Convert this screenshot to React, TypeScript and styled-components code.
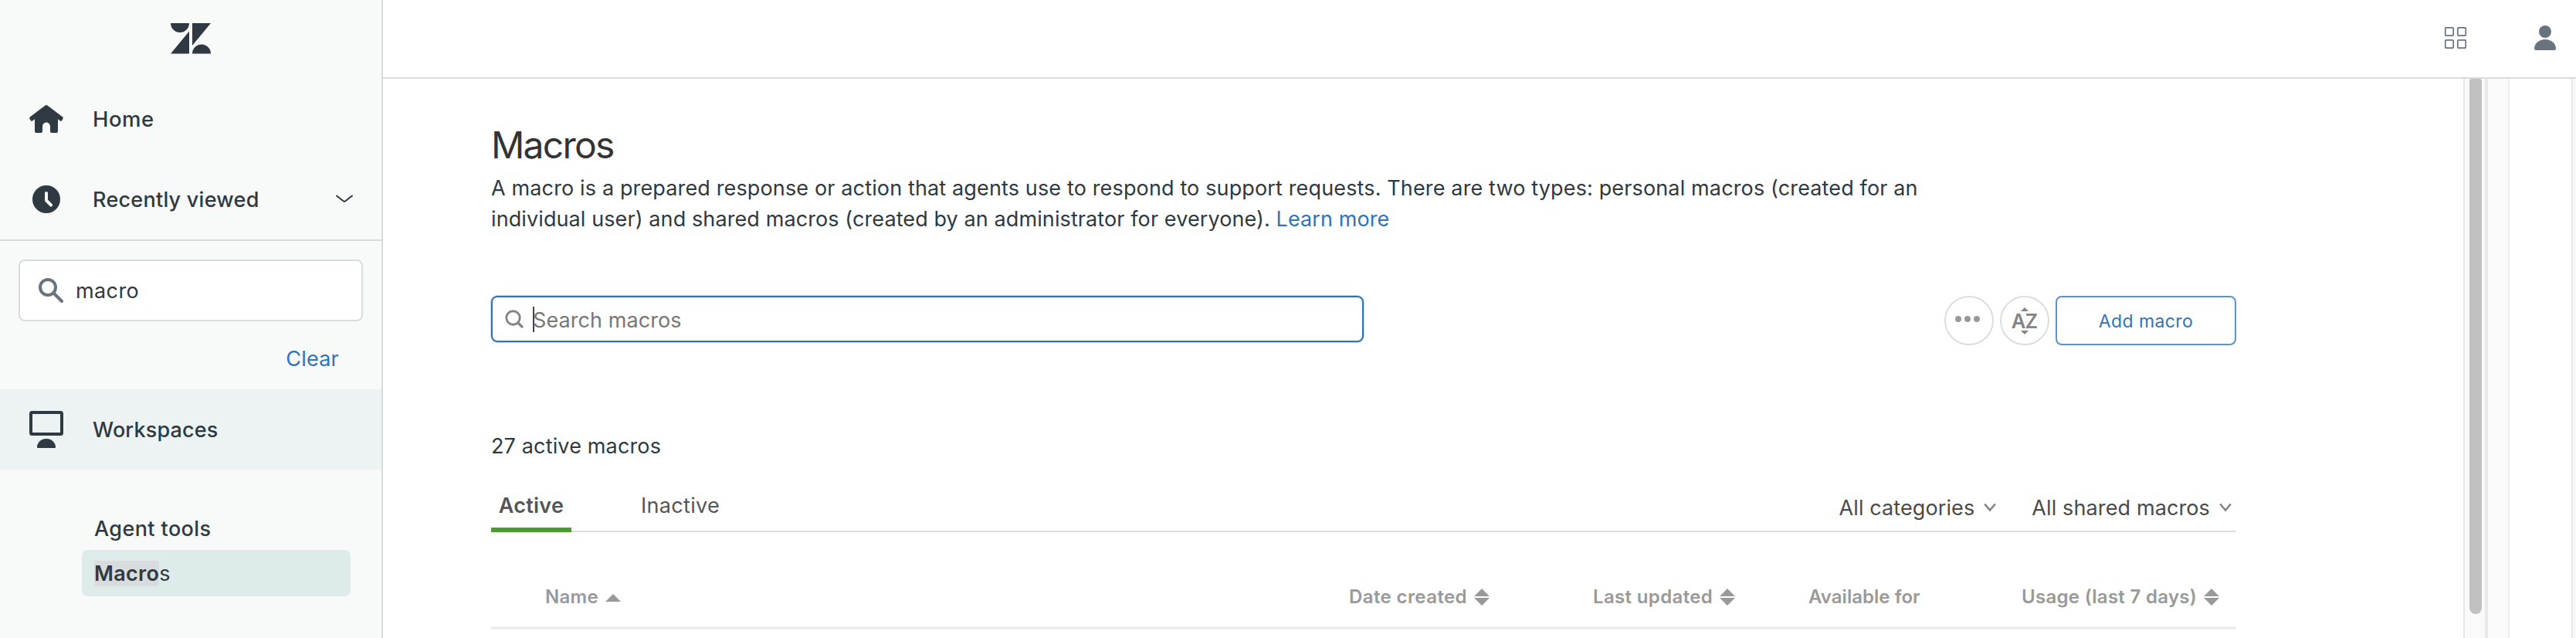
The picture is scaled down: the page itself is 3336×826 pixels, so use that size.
import React from "react";
import styled, { createGlobalStyle } from "styled-components";

const ink = "#2f3941";
const blue = "#3073b7";
const line = "#d8dcde";

const GlobalStyle = createGlobalStyle`
  *, *::before, *::after { box-sizing: border-box; }
  body {
    margin: 0;
    background: #fff;
    overflow: hidden;
    font-family: Inter, "Liberation Sans", sans-serif;
    font-size: 27px;
    color: ${ink};
  }
  svg { display: block; flex: none; }
  button, input { font: inherit; color: inherit; margin: 0; }
`;

const Label = styled.span<{ $track?: number; $weight?: number; $size?: number }>`
  font-size: ${(p) => p.$size ?? 27}px;
  font-weight: ${(p) => p.$weight ?? 400};
  letter-spacing: ${(p) => p.$track ?? 0}px;
  white-space: pre;
`;

const Page = styled.div`
  display: flex;
  width: 3336px;
  height: 826px;
`;

const Sidebar = styled.nav`
  flex: none;
  display: flex;
  flex-direction: column;
  width: 496px;
  border-right: 2px solid ${line};
  background: #f8f9f9;
`;

const Brand = styled.div`
  display: flex;
  justify-content: center;
  height: 102px;
  padding-top: 30px;
`;

const NavItem = styled.a<{ $current?: boolean; $indent: number }>`
  flex: none;
  display: grid;
  grid-template-columns: ${(p) => p.$indent}px 1fr auto;
  align-items: center;
  height: 104px;
  padding-right: 37px;
  background: ${(p) => (p.$current ? "#edf3f3" : "transparent")};
`;

const NavIcon = styled.span`
  display: block;
  padding-left: 36px;
`;

const Divider = styled.div`
  flex: none;
  height: 2px;
  background: ${line};
`;

const NavSearch = styled.div`
  flex: none;
  display: flex;
  align-items: center;
  gap: 16px;
  height: 80px;
  margin: 24px 24px 0;
  padding-left: 24px;
  border: 2px solid ${line};
  border-radius: 8px;
  background: #fff;
`;

const ClearRow = styled.div`
  flex: none;
  display: flex;
  justify-content: flex-end;
  align-items: center;
  height: 88px;
  padding: 8px 55px 0 0;
  color: ${blue};
`;

const SubNav = styled.div`
  display: flex;
  flex-direction: column;
  padding: 56px 40px 0 106px;
`;

const SubHeading = styled.div`
  display: flex;
  align-items: center;
  height: 40px;
  margin-bottom: 8px;
  padding-left: 16px;
`;

const SubItem = styled.a`
  display: flex;
  align-items: center;
  height: 60px;
  padding-left: 16px;
  border-radius: 8px;
  background: #deebeb;
`;

const Match = styled.mark`
  display: flex;
  align-items: center;
  height: 33px;
  border-radius: 4px;
  background: ${line};
  color: inherit;
`;

const Main = styled.main`
  flex: 1;
  display: flex;
  flex-direction: column;
  min-width: 0;
`;

const TopBar = styled.header`
  flex: none;
  display: flex;
  justify-content: flex-end;
  align-items: center;
  gap: 86px;
  height: 102px;
  padding: 0 24px 2px 0;
  border-bottom: 2px solid ${line};
`;

const Body = styled.div`
  flex: 1;
  display: flex;
  min-height: 0;
`;

const Content = styled.section`
  flex: 1;
  display: flex;
  flex-direction: column;
  padding: 56px 294px 0 140px;
`;

const Title = styled.h1`
  flex: none;
  margin: 0 0 6px;
  height: 60px;
  font-size: 48px;
  font-weight: 400;
  line-height: 60px;
  letter-spacing: -1.75px;
  color: #333;
`;

const Description = styled.p`
  flex: none;
  margin: 0 0 79px;
  line-height: 40px;
  letter-spacing: 0.14px;
  white-space: nowrap;
`;

const Link = styled.a`
  color: ${blue};
`;

const Toolbar = styled.div`
  flex: none;
  display: flex;
  align-items: center;
  gap: 8px;
  height: 64px;
`;

const SearchBox = styled.div`
  display: flex;
  align-items: center;
  width: 1130px;
  height: 60px;
  margin: 0 auto 4px 0;
  padding-left: 16px;
  border: 2px solid ${blue};
  border-radius: 8px;
  box-shadow: 0 0 0 1px rgba(48, 115, 183, 0.3);
  color: #777;
`;

const Caret = styled.span`
  width: 2px;
  height: 33px;
  margin: 1px -2px 0 12px;
  background: #444;
`;

const Placeholder = styled(Label)`
  padding-top: 2px;
`;

const RoundButton = styled.button`
  display: flex;
  flex-direction: column;
  justify-content: center;
  align-items: center;
  width: 64px;
  height: 64px;
  padding: 0;
  border: 2px solid #ddd;
  border-radius: 50%;
  background: #fff;
  color: #848484;
`;

const SortLetters = styled.span`
  height: 25px;
  padding-right: 1px;
  font-size: 25.5px;
  font-weight: 600;
  line-height: 25px;
  letter-spacing: -0.8px;
`;

const AddButton = styled.button`
  width: 234px;
  height: 64px;
  padding: 0 0 2px;
  border: 2px solid #5c93c9;
  border-radius: 8px;
  background: #fff;
  color: ${blue};
`;

const Count = styled.div`
  flex: none;
  display: flex;
  align-items: center;
  height: 40px;
  margin-top: 110px;
`;

const TabRow = styled.div`
  flex: none;
  display: flex;
  height: 72px;
  margin-top: 20px;
  box-shadow: inset 0 -2px 0 #ddd;
  color: #555;
`;

const Tab = styled.a<{ $active?: boolean }>`
  display: flex;
  justify-content: center;
  align-items: center;
  height: 72px;
  width: ${(p) => (p.$active ? 104 : 114)}px;
  margin-right: 84px;
  padding-top: ${(p) => (p.$active ? 8 : 2)}px;
  border-bottom: ${(p) => (p.$active ? "6px solid #4a9a2f" : "0")};
`;

const Filters = styled.div`
  display: flex;
  gap: 46px;
  height: 72px;
  margin-left: auto;
  padding: 8px 6px 0 0;
  color: #4a4a4a;
`;

const Filter = styled.div`
  display: flex;
  align-items: center;
  gap: 12px;
`;

const TableHead = styled.div`
  flex: none;
  display: grid;
  grid-template-columns: 1041px 316px 279px 276px 1fr;
  align-items: center;
  height: 80px;
  margin-top: 46px;
  padding: 0 0 2px 70px;
  border-bottom: 4px solid #eee;
  color: #999;
`;

const HeadCell = styled.div`
  display: flex;
  align-items: center;
  gap: 9px;
`;

const ScrollTrack = styled.div`
  width: 28px;
  padding-left: 6px;
  border-left: 2px solid #e7e7e7;
  background: #fafafa;
`;

const ScrollThumb = styled.div`
  width: 16px;
  height: 693px;
  border-radius: 3px 3px 8px 8px;
  background: #c1c1c1;
`;

const Gutter = styled.div`
  width: 32px;
  border-left: 4px solid #e9e9e9;
  border-right: 2px solid #ededed;
  background: #fafafa;
`;

const Blank = styled.div`
  width: 80px;
`;

const OuterEdge = styled.div`
  width: 6px;
  border-left: 2px solid #e7e7e7;
  background: #fafafa;
`;

const Logo = () => (
  <svg width="52" height="40" viewBox="0 0 52 40" fill={ink}>
    <path d="M24 10.5V39.5H0ZM0 0H24A12 12 0 0 1 0 0ZM28 29V0H52ZM28 39.5A12 12 0 0 1 52 39.5Z" />
  </svg>
);

const HomeIcon = () => (
  <svg width="48" height="48" viewBox="0 0 48 48" fill={ink}>
    <path d="M22.6 6.5Q24 5.5 25.4 6.5L45.2 21.6Q46.4 22.6 45.4 23.9L44 26.2Q43.2 27.2 42 26.4L39 24.2V40Q39 42 37 42H31Q29 42 29 40V33.5A5 5 0 0 0 19 33.5V40Q19 42 17 42H11Q9 42 9 40V24.2L6 26.4Q4.8 27.2 4 26.2L2.6 23.9Q1.6 22.6 2.8 21.6Z" />
  </svg>
);

const ClockIcon = () => (
  <svg width="48" height="48" viewBox="0 0 48 48" fill="none">
    <circle cx="24" cy="24" r="18" fill={ink} />
    <path d="M24 16V25.5L30 31.5" stroke="#f8f9f9" strokeWidth="4" strokeLinecap="round" strokeLinejoin="round" />
  </svg>
);

const MonitorIcon = () => (
  <svg width="48" height="48" viewBox="0 0 48 48" fill="none">
    <rect x="4" y="2" width="40" height="28" rx="1.5" stroke={ink} strokeWidth="4" />
    <path d="M12 47A12 11 0 0 1 36 47Q36 48 35 48H13Q12 48 12 47Z" fill={ink} />
  </svg>
);

const NavChevron = () => (
  <svg width="22" height="12" viewBox="0 0 22 12" fill="none">
    <path d="M1 1.5L9.6 8.3Q11 9.4 12.4 8.3L21 1.5" stroke={ink} strokeWidth="2" strokeLinecap="round" />
  </svg>
);

const Glass = () => (
  <svg width="32" height="32" viewBox="0 0 32 32" fill="none" stroke="#68737d">
    <circle cx="12" cy="12" r="10" strokeWidth="4" />
    <path d="M19.5 19.5L30 30" strokeWidth="4" strokeLinecap="round" />
  </svg>
);

const SmallGlass = () => (
  <svg width="24" height="24" viewBox="0 0 24 24" fill="none" stroke="#848484">
    <circle cx="10.5" cy="10.5" r="8.7" strokeWidth="2.9" />
    <path d="M16.5 16.5L23 23" strokeWidth="3.2" />
  </svg>
);

const AppsIcon = () => (
  <svg width="28" height="28" viewBox="0 0 28 28" fill="none" stroke="#68737d" strokeWidth="1.7">
    <rect x=".8" y=".8" width="10.4" height="10.4" rx="1.2" />
    <rect x="16.8" y=".8" width="10.4" height="10.4" rx="1.2" />
    <rect x=".8" y="16.8" width="10.4" height="10.4" rx="1.2" />
    <rect x="16.8" y="16.8" width="10.4" height="10.4" rx="1.2" />
  </svg>
);

const PersonIcon = () => (
  <svg width="32" height="32" viewBox="0 0 32 32" fill="#68737d">
    <circle cx="16" cy="8" r="8" />
    <path d="M2 30A14 12 0 0 1 30 30Q30 32 28 32H4Q2 32 2 30Z" />
  </svg>
);

const Dots = () => (
  <svg width="36" height="12" viewBox="0 0 36 12" fill="#999">
    <circle cx="4" cy="4" r="4" />
    <circle cx="16" cy="4" r="4" />
    <circle cx="28" cy="4" r="4" />
  </svg>
);

const Wedge = ({ down }: { down?: boolean }) => (
  <svg width="10" height="5" viewBox="0 0 10 5" fill="#848484">
    <path d={down ? "M0 0H10L5 5Z" : "M0 5H10L5 0Z"} />
  </svg>
);

const FilterChevron = () => (
  <svg width="16" height="12" viewBox="0 0 16 12" fill="none">
    <path d="M1.2 1.5L8 9.5L14.8 1.5" stroke="#848484" strokeWidth="2.6" />
  </svg>
);

const Sorted = () => (
  <svg width="20" height="14" viewBox="0 0 20 14" fill="#999">
    <path d="M10 4L20 14H0Z" />
  </svg>
);

const Sorter = () => (
  <svg width="20" height="24" viewBox="0 0 20 24" fill="#999">
    <path d="M10 2L20 12H0ZM0 14H20L10 24Z" />
  </svg>
);

const columns = [
  { name: "Name", track: 0.3, icon: <Sorted /> },
  { name: "Date created", track: 0.4, icon: <Sorter /> },
  { name: "Last updated", track: 0.35, icon: <Sorter /> },
  { name: "Available for", track: 0.03, icon: null },
  { name: "Usage (last 7 days)", track: 0.3, icon: <Sorter /> },
];

export default function App() {
  return (
    <>
      <GlobalStyle />
      <Page>
        <Sidebar>
          <Brand><Logo /></Brand>
          <NavItem $indent={120}>
            <NavIcon><HomeIcon /></NavIcon>
            <Label $weight={500} $size={27.5} $track={0.5}>Home</Label>
          </NavItem>
          <NavItem $indent={120}>
            <NavIcon><ClockIcon /></NavIcon>
            <Label $weight={500} $track={0.25}>Recently viewed</Label>
            <NavChevron />
          </NavItem>
          <Divider />
          <NavSearch>
            <Glass />
            <Label $track={0.4}>macro</Label>
          </NavSearch>
          <ClearRow><Label $track={0.25}>Clear</Label></ClearRow>
          <NavItem $current $indent={120}>
            <NavIcon><MonitorIcon /></NavIcon>
            <Label $weight={500} $track={0.17}>Workspaces</Label>
          </NavItem>
          <SubNav>
            <SubHeading><Label $weight={500} $track={0.4}>Agent tools</Label></SubHeading>
            <SubItem>
              <Match><Label $weight={600} $track={0.3}>Macro</Label></Match>
              <Label>s</Label>
            </SubItem>
          </SubNav>
        </Sidebar>
        <Main>
          <TopBar>
            <AppsIcon />
            <PersonIcon />
          </TopBar>
          <Body>
            <Content>
              <Title>Macros</Title>
              <Description>
                A macro is a prepared response or action that agents use to respond to support requests. There are two types: personal macros (created for an
                <br />
                <Label $track={0.1}>individual user) and shared macros (created by an administrator for everyone). <Link>Learn more</Link></Label>
              </Description>
              <Toolbar>
                <SearchBox>
                  <SmallGlass />
                  <Caret />
                  <Placeholder $track={0.08}>Search macros</Placeholder>
                </SearchBox>
                <RoundButton><Dots /></RoundButton>
                <RoundButton>
                  <Wedge />
                  <SortLetters>AZ</SortLetters>
                  <Wedge down />
                </RoundButton>
                <AddButton><Label $size={23} $track={0.4}>Add macro</Label></AddButton>
              </Toolbar>
              <Count><Label $track={0.15}>27 active macros</Label></Count>
              <TabRow>
                <Tab $active><Label $weight={600} $track={0.25}>Active</Label></Tab>
                <Tab><Label $track={0.3}>Inactive</Label></Tab>
                <Filters>
                  <Filter><Label $track={0.1}>All categories</Label><FilterChevron /></Filter>
                  <Filter><Label $track={0.12}>All shared macros</Label><FilterChevron /></Filter>
                </Filters>
              </TabRow>
              <TableHead>
                {columns.map((c) => (
                  <HeadCell key={c.name}>
                    <Label $size={24} $weight={600} $track={c.track}>{c.name}</Label>
                    {c.icon}
                  </HeadCell>
                ))}
              </TableHead>
            </Content>
            <ScrollTrack><ScrollThumb /></ScrollTrack>
            <Gutter />
            <Blank />
            <OuterEdge />
          </Body>
        </Main>
      </Page>
    </>
  );
}
